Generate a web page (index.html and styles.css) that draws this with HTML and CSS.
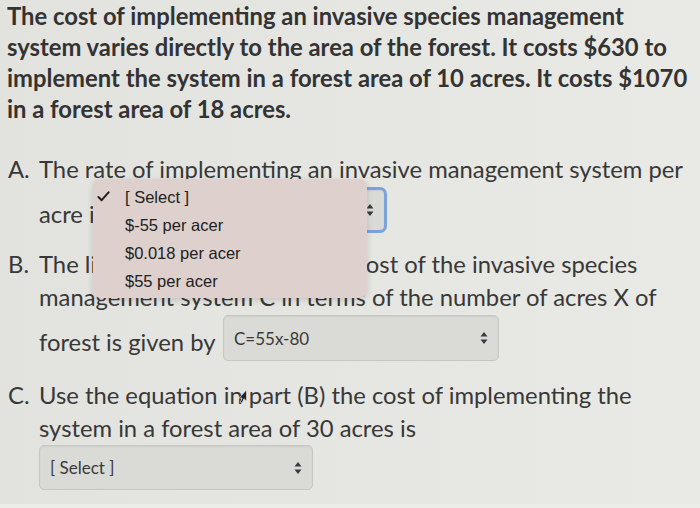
FILE: index.html
```html
<!DOCTYPE html>
<html>
<head>
<meta charset="utf-8">
<link rel="stylesheet" href="styles.css">
</head>
<body>
<div class="page">
  <p class="intro">The cost of implementing an invasive species management system varies directly to the area of the forest. It costs $630 to implement the system in a forest area of 10 acres. It costs $1070 in a forest area of 18 acres.</p>
  <div class="part part-a">
    <span class="marker">A.</span>
    <div class="body">The rate of implementing an invasive management system per acre is <span class="select focus"><span class="val"></span><svg class="arrows" viewBox="0 0 8 14" width="8" height="14"><path d="M4 1 L7.5 5.5 H0.5 Z M4 13 L7.5 8.5 H0.5 Z" fill="#3a3a3a"/></svg></span></div>
  </div>
  <div class="part part-b">
    <span class="marker">B.</span>
    <div class="body">The linear equation giving the cost of the invasive species management system C in terms of the number of acres X of forest is given by <span class="select wide"><span class="val">C=55x-80</span><svg class="arrows" viewBox="0 0 8 14" width="8" height="14"><path d="M4 1 L7.5 5.5 H0.5 Z M4 13 L7.5 8.5 H0.5 Z" fill="#3a3a3a"/></svg></span></div>
  </div>
  <div class="part part-c">
    <span class="marker">C.</span>
    <div class="body">Use the equation in part (B) the cost of implementing the system in a forest area of 30 acres is
      <div class="select block"><span class="val">[ Select ]</span><svg class="arrows" viewBox="0 0 8 14" width="8" height="14"><path d="M4 1 L7.5 5.5 H0.5 Z M4 13 L7.5 8.5 H0.5 Z" fill="#3a3a3a"/></svg></div>
    </div>
  </div>
  <ul class="menu">
    <li class="checked"><svg class="check" viewBox="0 0 14 12" width="13" height="11"><path d="M1.5 6.5 L5 10 L12.5 1.5" fill="none" stroke="#222" stroke-width="2.2" stroke-linecap="round" stroke-linejoin="round"/></svg>[ Select ]</li>
    <li>$-55 per acer</li>
    <li>$0.018 per acer</li>
    <li>$55 per acer</li>
  </ul>
  <svg class="cursor" viewBox="0 0 11 15" width="11" height="15"><path d="M8.5 1 L8.5 12 L6 9.8 L4 14 L2.2 13.2 L4.2 9 L1 9 Z" fill="#222" stroke="#ddd" stroke-width="0.7"/></svg>
</div>
</body>
</html>
```

FILE: styles.css
```css
html, body {
  margin: 0;
  padding: 0;
}
body {
  background: linear-gradient(90deg, #e2e2de 0%, #e6e6e2 60%, #e9e9e5 100%);
  width: 700px;
  height: 508px;
  overflow: hidden;
  font-family: Lato, "Open Sans", sans-serif;
  color: #383838;
}
.page {
  position: relative;
  padding: 1px 8px 0 7px;
  width: 690px;
  height: 503px;
  border-bottom: 5px solid #ecece9;
}
.intro {
  margin: 0;
  font-weight: 700;
  font-size: 23.8px;
  line-height: 31px;
  color: #333;
}
.part {
  display: flex;
  font-size: 23.8px;
  line-height: 33px;
}
.marker {
  flex: 0 0 31px;
  padding-left: 1px;
}
.body {
  flex: 1;
}
.part-a {
  margin-top: 28px;
}
.part-b {
  margin-top: 0;
}
.part-c {
  margin-top: 3px;
}
.select {
  display: inline-flex;
  align-items: center;
  justify-content: space-between;
  box-sizing: border-box;
  height: 46px;
  vertical-align: middle;
  background: #dadad6;
  border: 1px solid #c6c6c2;
  border-radius: 5px;
  padding: 0 10px 0 10px;
  font-size: 17px;
  color: #3a3a3a;
  box-shadow: inset 0 1px 2px rgba(0,0,0,0.06);
}
.select.focus {
  width: 274px;
  height: 46px;
  border: 3px solid #7aa3dc;
  border-radius: 7px;
  margin: 1px 0 15px 2px;
}
.select.wide {
  width: 276px;
  margin: 1px 0 15px 2px;
}
.select.block {
  display: flex;
  width: 274px;
  height: 45px;
  margin-top: 0;
}
.arrows {
  flex: none;
}
.menu {
  position: absolute;
  left: 93px;
  top: 179px;
  width: 274px;
  height: 119px;
  box-sizing: border-box;
  margin: 0;
  padding: 4px 0 0 32px;
  list-style: none;
  background: #ddd0cd;
  border-radius: 8px;
  box-shadow: 0 2px 6px rgba(0,0,0,0.15);
  font-family: "Liberation Sans", Arial, sans-serif;
  font-size: 16.5px;
  line-height: 28px;
  color: #222;
}
.menu li {
  position: relative;
}
.check {
  position: absolute;
  left: -28px;
  top: 8px;
}
.cursor {
  position: absolute;
  left: 238px;
  top: 389px;
}
```
